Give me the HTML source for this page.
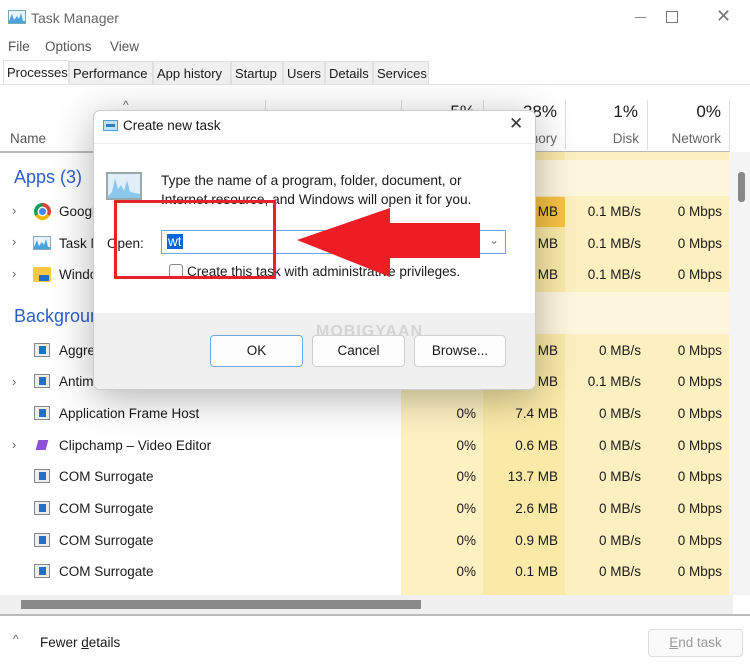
<!DOCTYPE html>
<html><head><meta charset="utf-8"><style>
*{margin:0;padding:0;box-sizing:border-box}
body{width:750px;height:669px;overflow:hidden;background:#fff;font-family:"Liberation Sans",sans-serif;font-size:13.5px;color:#1a1a1a;position:relative}
.a{position:absolute;white-space:nowrap}
.tab{position:absolute;top:61px;height:23px;background:#f0f0f0;border:1px solid #e0e0e0;border-bottom:none;font-size:13px;padding:4px 3px 0 3px}
.col{position:absolute;top:152px;height:443px}
.num{position:absolute;text-align:right;font-size:13.5px}
.ico{position:absolute;width:16px;height:14px;border:1px solid #888;background:#eee}
.ico::after{content:"";position:absolute;left:4px;top:2px;width:7px;height:8px;background:#1a73d0}
.chev{position:absolute;color:#666;font-size:13px}
.btn{position:absolute;top:335px;height:32px;background:#fdfdfd;border:1px solid #d0d0d0;border-radius:4px;text-align:center;line-height:30px;font-size:13.5px}
</style></head><body>
<svg class="a" style="left:8px;top:10px" width="18" height="14"><rect x="0.5" y="0.5" width="17" height="13" fill="#e8f3fb" stroke="#7aa"/><path d="M1 11 L4 4 L6 10 L9 6 L11 9 L13 3 L15 11 L17 11 L17 13 L1 13Z" fill="#4aa3df"/></svg>
<div class="a" style="left:31px;top:10px;font-size:14px;color:#666">Task Manager</div>
<div class="a" style="left:635px;top:17px;width:11px;height:1px;background:#888"></div>
<div class="a" style="left:666px;top:11px;width:12px;height:12px;border:1px solid #777"></div>
<div class="a" style="left:716px;top:6px;font-size:18px;color:#777">✕</div>
<div class="a" style="left:8px;top:39px;color:#555">File</div>
<div class="a" style="left:45px;top:39px;color:#555">Options</div>
<div class="a" style="left:110px;top:39px;color:#555">View</div>
<div class="tab" style="left:3px;width:66px;background:#fff;top:60px">Processes</div>
<div class="tab" style="left:69px;width:84px">Performance</div>
<div class="tab" style="left:153px;width:78px">App history</div>
<div class="tab" style="left:231px;width:52px">Startup</div>
<div class="tab" style="left:283px;width:42px">Users</div>
<div class="tab" style="left:325px;width:48px">Details</div>
<div class="tab" style="left:373px;width:56px">Services</div>
<div class="a" style="left:0;top:84px;width:750px;height:1px;background:#e5e5e5"></div>
<div class="a" style="left:123px;top:98px;color:#666;font-size:12px">^</div>
<div class="a" style="left:10px;top:131px;color:#555">Name</div>
<div class="a" style="left:265px;top:100px;width:1px;height:50px;background:#ddd"></div>
<div class="a" style="left:401px;top:100px;width:1px;height:50px;background:#ddd"></div>
<div class="a" style="left:483px;top:100px;width:1px;height:50px;background:#ddd"></div>
<div class="a" style="left:565px;top:100px;width:1px;height:50px;background:#ddd"></div>
<div class="a" style="left:647px;top:100px;width:1px;height:50px;background:#ddd"></div>
<div class="a" style="left:729px;top:100px;width:1px;height:50px;background:#ddd"></div>
<div class="num" style="left:401px;width:74px;top:102px;font-size:17px">5%</div>
<div class="num" style="left:565px;width:73px;top:102px;font-size:17px">1%</div>
<div class="num" style="left:647px;width:74px;top:102px;font-size:17px">0%</div>
<div class="num" style="left:565px;width:74px;top:131px;color:#666">Disk</div>
<div class="num" style="left:647px;width:74px;top:131px;color:#666">Network</div>
<div class="num" style="left:483px;width:74px;top:102px;font-size:17px">38%</div>
<div class="num" style="left:483px;width:74px;top:131px;color:#666">Memory</div>
<div class="a" style="left:0;top:151px;width:730px;height:2px;background:#bbb"></div>
<div class="col" style="left:401px;width:82px;background:#fdf1c2"></div>
<div class="col" style="left:483px;width:82px;background:#fae9a7"></div>
<div class="col" style="left:565px;width:82px;background:#fcf0c0"></div>
<div class="col" style="left:647px;width:82px;background:#fcf0c0"></div>
<div class="a" style="left:401px;top:160px;width:328px;height:36px;background:#fdf6dd"></div>
<div class="a" style="left:401px;top:292px;width:328px;height:42px;background:#fdf6dd"></div>
<div class="a" style="left:483px;top:197px;width:82px;height:30px;background:#f6c244"></div>
<div class="a" style="left:729px;top:152px;width:21px;height:443px;background:#f4f4f4"></div>
<div class="a" style="left:738px;top:172px;width:7px;height:30px;background:#888;border-radius:3px"></div>
<div class="a" style="left:14px;top:167px;font-size:18px;color:#2b5fc9">Apps (3)</div>
<div class="chev" style="left:12px;top:203px">›</div>
<div class="a" style="left:34px;top:203px;width:17px;height:17px;border-radius:50%;background:conic-gradient(#db4437 0 120deg,#f4b400 120deg 240deg,#0f9d58 240deg)"></div>
<div class="a" style="left:39px;top:208px;width:7px;height:7px;border-radius:50%;background:#4285f4;box-shadow:0 0 0 1.5px #fff"></div>
<div class="a" style="left:59px;top:204px">Google Chrome</div>
<div class="chev" style="left:12px;top:234px">›</div>
<svg class="a" style="left:33px;top:236px" width="18" height="14"><rect x="0.5" y="0.5" width="17" height="13" fill="#e8f3fb" stroke="#8ab"/><path d="M1 11 L4 4 L6 10 L9 6 L11 9 L13 3 L15 11 L17 11 L17 13 L1 13Z" fill="#4aa3df"/></svg>
<div class="a" style="left:59px;top:236px">Task Manager</div>
<div class="chev" style="left:12px;top:266px">›</div>
<div class="a" style="left:33px;top:267px;width:18px;height:15px;background:#f7c842;border-radius:2px"></div>
<div class="a" style="left:39px;top:275px;width:10px;height:6px;background:#1f6fc8"></div>
<div class="a" style="left:59px;top:267px">Windows Explorer</div>
<div class="a" style="left:14px;top:306px;font-size:18px;color:#2b5fc9">Background processes</div>
<div class="ico" style="left:34px;top:343px"></div><div class="a" style="left:59px;top:343px">Aggregator host</div>
<div class="chev" style="left:12px;top:374px">›</div>
<div class="ico" style="left:34px;top:374px"></div><div class="a" style="left:59px;top:374px">Antimalware Service</div>
<div class="ico" style="left:34px;top:406px"></div><div class="a" style="left:59px;top:406px">Application Frame Host</div>
<div class="chev" style="left:12px;top:437px">›</div>
<div class="a" style="left:37px;top:440px;width:10px;height:10px;background:#8b4fd8;transform:skewX(-15deg)"></div><div class="a" style="left:59px;top:438px">Clipchamp – Video Editor</div>
<div class="ico" style="left:34px;top:469px"></div><div class="a" style="left:59px;top:469px">COM Surrogate</div>
<div class="ico" style="left:34px;top:501px"></div><div class="a" style="left:59px;top:501px">COM Surrogate</div>
<div class="ico" style="left:34px;top:533px"></div><div class="a" style="left:59px;top:533px">COM Surrogate</div>
<div class="ico" style="left:34px;top:564px"></div><div class="a" style="left:59px;top:564px">COM Surrogate</div>
<div class="num" style="left:483px;width:75px;top:204px">MB</div>
<div class="num" style="left:565px;width:76px;top:204px">0.1 MB/s</div><div class="num" style="left:647px;width:75px;top:204px">0 Mbps</div>
<div class="num" style="left:483px;width:75px;top:236px">MB</div>
<div class="num" style="left:565px;width:76px;top:236px">0.1 MB/s</div><div class="num" style="left:647px;width:75px;top:236px">0 Mbps</div>
<div class="num" style="left:483px;width:75px;top:267px">MB</div>
<div class="num" style="left:565px;width:76px;top:267px">0.1 MB/s</div><div class="num" style="left:647px;width:75px;top:267px">0 Mbps</div>
<div class="num" style="left:483px;width:75px;top:343px">MB</div>
<div class="num" style="left:565px;width:76px;top:343px">0 MB/s</div><div class="num" style="left:647px;width:75px;top:343px">0 Mbps</div>
<div class="num" style="left:483px;width:75px;top:374px">MB</div>
<div class="num" style="left:565px;width:76px;top:374px">0.1 MB/s</div><div class="num" style="left:647px;width:75px;top:374px">0 Mbps</div>
<div class="num" style="left:401px;width:75px;top:406px">0%</div><div class="num" style="left:483px;width:75px;top:406px">7.4 MB</div><div class="num" style="left:565px;width:76px;top:406px">0 MB/s</div><div class="num" style="left:647px;width:75px;top:406px">0 Mbps</div>
<div class="num" style="left:401px;width:75px;top:438px">0%</div><div class="num" style="left:483px;width:75px;top:438px">0.6 MB</div><div class="num" style="left:565px;width:76px;top:438px">0 MB/s</div><div class="num" style="left:647px;width:75px;top:438px">0 Mbps</div>
<div class="num" style="left:401px;width:75px;top:469px">0%</div><div class="num" style="left:483px;width:75px;top:469px">13.7 MB</div><div class="num" style="left:565px;width:76px;top:469px">0 MB/s</div><div class="num" style="left:647px;width:75px;top:469px">0 Mbps</div>
<div class="num" style="left:401px;width:75px;top:501px">0%</div><div class="num" style="left:483px;width:75px;top:501px">2.6 MB</div><div class="num" style="left:565px;width:76px;top:501px">0 MB/s</div><div class="num" style="left:647px;width:75px;top:501px">0 Mbps</div>
<div class="num" style="left:401px;width:75px;top:533px">0%</div><div class="num" style="left:483px;width:75px;top:533px">0.9 MB</div><div class="num" style="left:565px;width:76px;top:533px">0 MB/s</div><div class="num" style="left:647px;width:75px;top:533px">0 Mbps</div>
<div class="num" style="left:401px;width:75px;top:564px">0%</div><div class="num" style="left:483px;width:75px;top:564px">0.1 MB</div><div class="num" style="left:565px;width:76px;top:564px">0 MB/s</div><div class="num" style="left:647px;width:75px;top:564px">0 Mbps</div>
<div class="a" style="left:0;top:595px;width:733px;height:19px;background:#f0f0f0"></div>
<div class="a" style="left:21px;top:600px;width:400px;height:9px;background:#8a8a8a"></div>
<div class="a" style="left:0;top:614px;width:750px;height:2px;background:#bbb"></div>
<div class="a" style="left:13px;top:632px;color:#666;font-size:12px">^</div>
<div class="a" style="left:40px;top:635px">Fewer <u>d</u>etails</div>
<div class="a" style="left:648px;top:629px;width:95px;height:28px;border:1px solid #ddd;background:#fafafa;border-radius:4px;color:#999;text-align:center;line-height:26px"><u>E</u>nd task</div>
<div class="a" style="left:93px;top:110px;width:443px;height:280px;background:#fff;border:1px solid #ccc;border-radius:7px;box-shadow:0 8px 40px rgba(0,0,0,.3);overflow:hidden">
 <div class="a" style="left:0;top:202px;width:443px;height:78px;background:#f0f0f0"></div>
 <div class="a" style="left:0;top:32px;width:443px;height:1px;background:#eee"></div>
</div>
<div class="a" style="left:103px;top:120px;width:15px;height:11px;border:1.5px solid #4aa3df;background:#bfe2f7"></div>
<div class="a" style="left:106px;top:124px;width:9px;height:3px;background:#2b7fc7"></div>
<div class="a" style="left:123px;top:118px;font-size:13.5px">Create new task</div>
<div class="a" style="left:509px;top:114px;font-size:17px;color:#333">✕</div>
<svg class="a" style="left:106px;top:172px" width="36" height="28"><rect x="1" y="1" width="34" height="26" fill="#dfeef8" stroke="#9aa" stroke-width="2"/><path d="M2 24 L6 20 L9 6 L12 17 L15 13 L18 19 L21 8 L24 20 L34 22 L34 26 L2 26Z" fill="#8cc8ee"/></svg>
<div class="a" style="left:161px;top:171px;font-size:13.7px;line-height:19px">Type the name of a program, folder, document, or<br>Internet resource, and Windows will open it for you.</div>
<div class="a" style="left:107px;top:236px">Open:</div>
<div class="a" style="left:161px;top:230px;width:345px;height:24px;border:1px solid #6ea8e0;background:#fff"></div>
<div class="a" style="left:167px;top:234px;background:#0a64d6;color:#fff;padding:0 1px">wt</div>
<div class="a" style="left:489px;top:233px;color:#777;font-size:12px">⌄</div>
<div class="a" style="left:169px;top:264px;width:14px;height:14px;border:1px solid #888;border-radius:3px;background:#fff"></div>
<div class="a" style="left:187px;top:264px">Create this task with administrative privileges.</div>
<div class="a" style="left:316px;top:323px;font-size:16px;font-weight:bold;color:#d4d4d4;letter-spacing:1px">MOBIGYAAN</div>
<div class="btn" style="left:210px;width:93px;border-color:#6ea8e0">OK</div>
<div class="btn" style="left:312px;width:93px">Cancel</div>
<div class="btn" style="left:414px;width:92px">Browse...</div>
<div class="a" style="left:114px;top:200px;width:162px;height:79px;border:3px solid #e8202a"></div>
<svg class="a" style="left:295px;top:206px" width="190" height="74"><polygon points="2,34 95,2 95,17 185,17 185,52 95,52 95,71" fill="#ee1c25"/></svg>
</body></html>
